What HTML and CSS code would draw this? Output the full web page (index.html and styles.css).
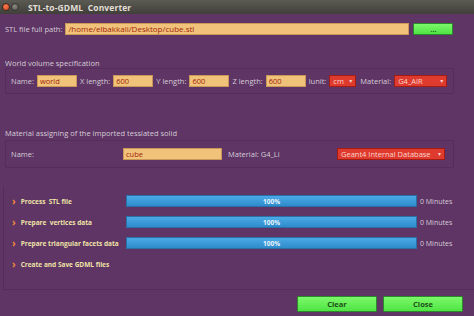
FILE: index.html
```html
<!DOCTYPE html>
<html>
<head>
<meta charset="utf-8">
<link rel="stylesheet" href="styles.css">
</head>
<body>
<div class="window">
  <div class="titlebar">
    <span class="wbtn close"></span>
    <span class="wbtn min"></span>
    <span class="title">STL-to-GDML&nbsp; Converter</span>
  </div>
  <div class="content">
    <div class="path-row">
      <span class="lbl">STL file full path:</span>
      <div class="input path">/home/elbakkali/Desktop/cube.stl</div>
      <div class="gbtn small">...</div>
    </div>

    <div class="sec-title world-title">World volume specification</div>
    <div class="group world">
      <span class="lbl">Name:</span>
      <div class="input w40">world</div>
      <span class="lbl">X length:</span>
      <div class="input w40">600</div>
      <span class="lbl">Y length:</span>
      <div class="input w40">600</div>
      <span class="lbl">Z length:</span>
      <div class="input w40">600</div>
      <span class="lbl">lunit:</span>
      <div class="select w27">cm<span class="arrow">▾</span></div>
      <span class="lbl">Material:</span>
      <div class="select w53">G4_AIR<span class="arrow">▾</span></div>
    </div>

    <div class="sec-title mat-title">Material assigning of the imported tesslated solid</div>
    <div class="group mat">
      <span class="lbl name-lbl">Name:</span>
      <div class="input w99">cube</div>
      <span class="lbl mat-lbl">Material: G4_Li</span>
      <div class="select w108">Geant4 Internal Database<span class="arrow">▾</span></div>
    </div>

    <div class="group progress">
      <div class="prow">
        <span class="step"><span class="chev">›</span>Process&nbsp; STL file</span>
        <div class="bar"><span>100%</span></div>
        <span class="lbl mins">0 Minutes</span>
      </div>
      <div class="prow">
        <span class="step"><span class="chev">›</span>Prepare&nbsp; vertices data</span>
        <div class="bar"><span>100%</span></div>
        <span class="lbl mins">0 Minutes</span>
      </div>
      <div class="prow">
        <span class="step"><span class="chev">›</span>Prepare triangular facets data</span>
        <div class="bar"><span>100%</span></div>
        <span class="lbl mins">0 Minutes</span>
      </div>
      <div class="prow last">
        <span class="step"><span class="chev">›</span>Create and Save GDML files</span>
      </div>
    </div>

    <div class="footer">
      <div class="gbtn big">Clear</div>
      <div class="gbtn big">Close</div>
    </div>
  </div>
</div>
</body>
</html>
```
FILE: styles.css
```css
html, body {
  margin: 0;
  padding: 0;
}
body {
  width: 474px;
  height: 316px;
  overflow: hidden;
  background: #5e3565;
  font-family: "Open Sans", "DejaVu Sans", sans-serif;
  font-size: 7.5px;
  color: #d9cfd9;
}
.window {
  width: 474px;
  height: 316px;
  display: flex;
  flex-direction: column;
}
.titlebar {
  height: 14px;
  flex: none;
  background: linear-gradient(#5b5a53, #403f3a);
  display: flex;
  align-items: center;
  padding-left: 2px;
  box-sizing: border-box;
}
.wbtn {
  width: 8px;
  height: 8px;
  border-radius: 50%;
  margin-right: 1px;
  box-sizing: border-box;
}
.wbtn.close {
  background: radial-gradient(circle at 40% 35%, #f77a50, #d8451a);
  border: 1px solid #3a2a22;
}
.wbtn.min {
  background: radial-gradient(circle at 40% 35%, #8a8880, #56554f);
  border: 1px solid #35342f;
}
.title {
  margin-left: 8px;
  font-weight: bold;
  font-size: 8.5px;
  color: #e2dfd6;
  letter-spacing: 0.1px;
}
.content {
  position: relative;
  flex: 1;
  display: flex;
  flex-direction: column;
}
.lbl {
  white-space: nowrap;
  color: #d6cbd6;
}
.path-row {
  display: flex;
  align-items: center;
  margin: 9px 0 0 5px;
  height: 12px;
}
.input {
  height: 12px;
  box-sizing: border-box;
  background: #f0c27a;
  border: 1px solid #c99758;
  color: #a3260a;
  font-size: 7.5px;
  line-height: 10px;
  padding-left: 2px;
  white-space: nowrap;
  overflow: hidden;
}
.input.path {
  width: 344px;
  margin-left: 3px;
  font-size: 8px;
}
.gbtn {
  box-sizing: border-box;
  background: linear-gradient(#7cf86a, #4fe444);
  border: 1px solid #2b8a2a;
  color: #1c4d17;
  font-weight: bold;
  display: flex;
  align-items: center;
  justify-content: center;
  border-radius: 1px;
}
.gbtn.small {
  width: 40px;
  height: 12px;
  margin-left: 4px;
  font-size: 7px;
}
.sec-title {
  margin-left: 5px;
  height: 10px;
  line-height: 10px;
  color: #d6cbd6;
  font-size: 7.5px;
}
.world-title { margin-top: 23px; }
.group {
  margin-left: 5px;
  margin-right: 20px;
  border: 1px solid rgba(40, 10, 45, 0.18);
  border-radius: 2px;
  display: flex;
  align-items: center;
}
.world {
  margin-top: 0;
  height: 26px;
  box-sizing: border-box;
  padding-left: 5px;
}
.world .lbl { margin-right: 3px; }
.world .input { margin-right: 3px; }
.world .select { margin-right: 4px; }
.w40 { width: 40px; }
.w27 { width: 27px; }
.w53 { width: 53px; }
.w99 { width: 99px; }
.w108 { width: 108px; }
.select {
  height: 12px;
  box-sizing: border-box;
  background: #df3a2e;
  border: 1px solid #a41c16;
  color: #fbd5cc;
  line-height: 10px;
  padding-left: 3px;
  position: relative;
  white-space: nowrap;
}
.select .arrow {
  position: absolute;
  right: 3px;
  top: 0;
  font-size: 6px;
  color: #f6cfc8;
}
.mat-title { margin-top: 34px; }
.mat {
  margin-top: 2px;
  height: 28px;
  box-sizing: border-box;
  padding-left: 5px;
}
.name-lbl { width: 112px; }
.mat-lbl { margin-left: 6px; width: 109px; }
.progress {
  margin: 18px 0 0 3px;
  border-right: none;
  border-top: none;
  height: 104px;
  box-sizing: border-box;
  display: flex;
  flex-direction: column;
  align-items: stretch;
  padding-top: 9px;
  border-radius: 0;
}
.prow {
  display: flex;
  align-items: center;
  height: 12px;
  margin-bottom: 9px;
}
.step {
  width: 113px;
  padding-left: 8px;
  font-weight: bold;
  font-size: 6.5px;
  color: #efe2a6;
  white-space: nowrap;
  display: flex;
  align-items: center;
}
.chev {
  color: #f08a3c;
  font-size: 10px;
  font-weight: bold;
  margin-right: 5px;
  line-height: 8px;
}
.bar {
  width: 291px;
  height: 12px;
  margin-left: 1px;
  background: linear-gradient(#4aa9e6, #2f8ccc);
  border: 1px solid #2a6fa6;
  box-sizing: border-box;
  display: flex;
  align-items: center;
  justify-content: center;
  color: #e8f4fc;
  font-size: 6.5px;
  font-weight: bold;
}
.mins {
  margin-left: 3px;
  font-size: 7px;
}
.footer {
  display: flex;
  justify-content: flex-end;
  margin-top: 6px;
  padding-right: 11px;
  gap: 6px;
}
.gbtn.big {
  width: 80px;
  height: 16px;
  font-size: 7.5px;
}
```
